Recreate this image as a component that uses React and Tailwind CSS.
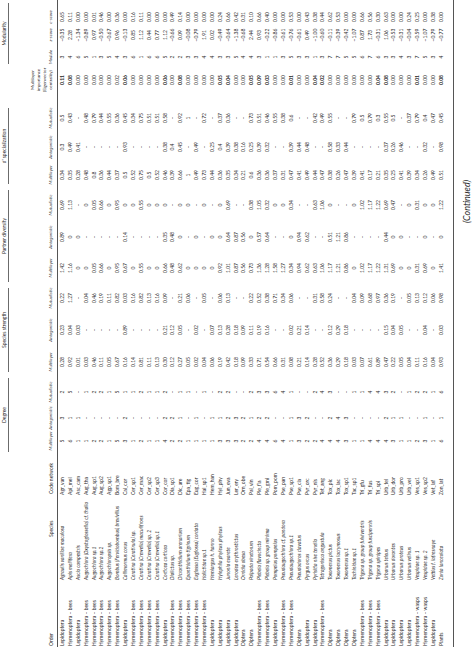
import React from 'react';

const H = 'Hymenoptera – bees';
const L = 'Lepidoptera';
const D = 'Diptera';
const W = 'Hymenoptera – wasps';

// order|species|code|deg ML|deg A|deg M|str ML|str A|str M|div ML|div A|div M|d' ML|d' A|d' M|eigen (* = bold)|module|z|c
const raw = [
  [L, 'Agraulis vanillae maculosa|Agr_van|5|3|2|0.28|0.23|0.22|1.42|0.89|0.69|0.34|0.3|0.5|*0.11|3|−0.35|0.65'],
  [H, 'Apis mellifera|Api_mel|6|1|5|0.92|0.04|1.27|1.16|0|1.13|0.35|0.49|0.43|*0.08|4|2.28|0.11'],
  [L, 'Ascia campestris|Asc_cam|1|1|–|0.01|0.03|–|0|0|–|0.28|0.41|–|0.00|6|−1.34|0.00'],
  [H, 'Augochlora (Oxystoglossella) cf. thalia|Aug_tha|1|–|1|0.03|–|0.04|0|–|0|0.48|–|0.48|0.00|5|−0.89|0.00'],
  [H, 'Augochlora sp.1|Aug_sp1|2|–|2|0.46|–|0.46|0.05|–|0.05|0.8|–|0.79|0.00|1|0.97|0.01'],
  [H, 'Augochlora sp.2|Aug_sp2|2|–|2|0.11|–|0.19|0.66|–|0.66|0.36|–|0.44|0.00|3|−0.50|0.46'],
  [H, 'Augochloropsis sp.|Agp_sp1|1|–|1|0.05|–|0.11|0|–|0|0.44|–|0.55|0.00|5|−0.67|0.00'],
  [H, 'Bombus (Fervidobombus) brevivillus|Bom_bre|5|–|5|0.67|–|0.82|0.95|–|0.95|0.37|–|0.36|0.02|4|0.96|0.36'],
  [L, 'Callimormus corus|Cal_cor|3|2|1|0.16|0.89|0.03|0.67|0.14|0|0.5|0.93|0.45|*0.06|3|−0.13|0.00'],
  [H, 'Ceratina (Ceratinula) sp.|Cer_sp1|1|–|1|0.14|–|0.16|0|–|0|0.52|–|0.34|0.00|6|0.85|0.16'],
  [H, 'Ceratina (Crewella) maculifrons|Cer_mac|2|–|2|0.81|–|0.82|0.55|–|0.55|0.75|–|0.75|0.00|1|1.12|0.11'],
  [H, 'Ceratina (Crewella) sp. 2|Cer_sp2|1|–|1|0.11|–|0.13|0|–|0|0.5|–|0.51|0.00|6|0.44|0.00'],
  [H, 'Ceratina (Crewella) sp.1|Cer_sp3|1|–|1|0.13|–|0.16|0|–|0|0.52|–|0.51|0.00|6|0.77|0.00'],
  [L, 'Corticea corticea|Cor_cor|4|2|2|0.30|0.21|0.09|0.66|0.35|0|0.46|0.38|0.58|*0.06|5|1.12|0.00'],
  [H, 'Dialictus sp.|Dia_sp1|2|2|–|0.12|0.12|–|0.48|0.48|–|0.39|0.4|–|0.00|2|−0.66|0.49'],
  [H, 'Dicranthidium arenarium|Dic_are|2|1|1|0.27|0.05|0.21|0.62|0|0|0.66|0.45|0.92|*0.08|2|0.09|0.14'],
  [H, 'Epanthidium tigrinum|Epa_tig|1|–|1|0.05|–|0.06|0|–|0|1|–|1|0.00|3|−0.08|0.00'],
  [H, 'Euglossa (Euglossa) cordata|Eug_cor|1|1|–|0.02|0.02|–|0|0|–|0.49|0.49|–|0.00|3|−0.79|0.00'],
  [H, 'Halictidae sp.1|Hal_sp1|1|–|1|0.04|–|0.05|0|–|0|0.73|–|0.72|0.00|4|1.91|0.00'],
  [L, 'Hemiargus h. hanno|Hem_han|1|1|–|0.06|0.07|–|0|0|–|0.44|0.25|–|0.00|4|0.02|0.00'],
  [L, 'Hylephila phyleus phyleus|Hyl_phy|3|1|2|0.19|0.13|0.06|0.92|0|0|0.36|0.4|0.37|*0.05|3|−0.49|0.24'],
  [L, 'Junonia evarete|Jun_eva|3|2|2|0.42|0.28|0.13|1.01|0.64|0.69|0.35|0.39|0.36|*0.04|3|−0.64|0.66'],
  [L, 'Lerodea erythrostictus|Ler_ery|3|3|–|0.18|0.18|–|0.87|0.87|–|0.34|0.38|–|0.00|5|−1.38|0.42'],
  [D, 'Ornidia obesa|Orn_obe|2|2|–|0.09|0.09|–|0.56|0.56|–|0.21|0.16|–|0.00|4|−0.68|0.31'],
  [D, 'Palpada vinetorum|Pal_vin|2|1|2|0.33|0.11|0.22|0.73|0|0.38|0.6|0.25|0.73|*0.05|4|2.44|0.10'],
  [H, 'Plebeia flavocincta|Ple_fla|4|2|3|0.71|0.19|0.52|1.36|0.57|1.05|0.36|0.39|0.51|*0.09|3|0.93|0.66'],
  [H, 'Plebeia sp. group minima|Ple_gmi|4|2|3|0.54|0.16|0.38|1.28|0.64|0.32|0.36|0.32|0.46|*0.03|1|−0.22|0.40'],
  [L, 'Pompeius pompeius|Pom_pom|6|–|6|0.66|–|0.71|1.58|–|0|0.37|–|0.55|0.00|1|−0.86|0.00'],
  [H, 'Pseudaugochlora cf. pandora|Pse_pan|4|–|4|0.31|–|0.34|1.27|–|0|0.31|–|0.38|0.00|3|−0.61|0.00'],
  [H, 'Pseudaugochlora sp.1|Pse_sp1|1|1|1|0.08|0.02|0.06|0.34|0|0.34|0.47|0.39|0.6|*0.01|5|−0.76|0.53'],
  [D, 'Pseudodoros clavatus|Pse_cla|3|3|–|0.21|0.21|–|0.94|0.94|–|0.41|0.44|–|0.00|3|−0.61|0.00'],
  [L, 'Pyrgus orcus|Pyr_orc|2|2|–|0.14|0.14|–|0.62|0.62|–|0.49|0.48|–|0.00|3|0.49|0.43'],
  [L, 'Pyrisitia nise tenella|Pyr_nis|2|–|2|0.28|–|0.31|0.63|–|0.63|0.44|–|0.42|*0.04|1|−1.00|0.38'],
  [H, 'Tetragonisca angustula|Tet_ang|4|–|4|0.52|–|0.58|1.06|–|1.06|0.47|–|0.49|*0.02|3|−0.60|0.44'],
  [D, 'Toxomerus pictus|Tox_pic|4|2|3|0.36|0.12|0.24|1.17|0.51|0|0.38|0.58|0.55|0.00|7|−0.11|0.62'],
  [D, 'Toxomerus lacrymosus|Tox_lac|4|4|–|0.29|0.29|–|1.21|1.21|–|0.26|0.33|–|0.00|7|−0.39|0.53'],
  [D, 'Toxomerus sp.1|Tox_sp1|3|3|–|0.18|0.18|–|0.86|0.86|–|0.47|0.44|–|0.00|5|−0.42|0.00'],
  [D, 'Tachinidae sp.1|Tac_sp1|1|–|1|0.03|–|0.04|0|–|0|0.39|–|0.79|0.00|5|−1.07|0.00'],
  [H, 'Trigona sp. group fulviventris|Tri_gfu|1|–|1|0.07|–|0.09|1.02|–|1.02|0.41|–|0.5|0.00|6|0.87|0.66'],
  [H, 'Trigona sp. group fuscipennis|Tri_fus|4|–|4|0.61|–|0.68|1.17|–|1.17|0.17|–|0.79|0.00|7|1.73|0.56'],
  [H, 'Trigona spinipes|Tri_spi|4|–|4|0.89|–|0.97|1.22|–|1.22|0.21|–|0.3|*0.04|6|−0.31|0.30'],
  [L, 'Urbanus teleus|Urb_tel|4|2|3|0.47|0.15|0.36|1.31|0.44|0.69|0.35|0.37|0.55|*0.08|3|1.06|0.63'],
  [L, 'Urbanus dorantes|Urb_dor|3|1|2|0.22|0.04|0.19|0.69|0|0.47|0.25|0.26|0.5|0.00|3|−0.53|0.00'],
  [L, 'Urbanus proteus|Urb_pro|1|1|–|0.05|0.05|–|0|0|–|0.41|0.46|–|0.00|4|−0.31|0.00'],
  [L, 'Urbanus velinus|Urb_vel|1|–|1|0.04|–|0.05|0|–|0|0.39|–|0.37|0.00|3|−0.04|0.24'],
  [W, 'Vespidae sp. 1|Ves_sp1|2|–|2|0.11|–|0.13|0.31|–|0.31|0.34|–|0.79|*0.01|7|−0.59|0.25'],
  [W, 'Vespidae sp. 2|Ves_sp2|3|1|2|0.16|0.04|0.12|0.69|0|0|0.26|0.32|0.4|0.00|5|−1.07|0.00'],
  [L, 'Vettius f. lafresnaye|Vet_laf|1|–|1|0.04|–|0.06|0|–|0|0.49|–|0.47|0.00|3|−0.79|0.38'],
  ['Plants', 'Zonia lanceolata|Zon_lat|6|1|6|0.93|0.03|0.98|1.41|0|1.22|0.51|0.98|0.45|*0.08|4|−0.77|0.00'],
];

const rows = raw.map(([order, rest]) => [order, ...rest.split('|')]);

// column widths along the (unrotated) table, left to right
const grid =
  'grid grid-cols-[67px_84px_41px_28px_18px_34px_26px_38px_26px_34px_28px_36px_24px_32px_26px_12px_26px_20px_24px_12px_11px]';

const sub = ['Multilayer', 'Antagonistic', 'Mutualistic'];

const Group = ({ start, span, children }) => (
  <div
    className="row-start-1 mx-[3px] h-[9px] border-b border-[#6b6b6b] pt-[1px] text-center leading-[6px] whitespace-nowrap"
    style={{ gridColumnStart: start, gridColumnEnd: `span ${span}` }}
  >
    {children}
  </div>
);

const Sub = ({ col, children }) => (
  <div
    className="row-start-2 self-end flex justify-center pb-[3px] text-[4.5px] italic leading-[6px] whitespace-nowrap"
    style={{ gridColumnStart: col }}
  >
    {children}
  </div>
);

export default function App() {
  return (
    <div className="w-[474px] h-[647px] overflow-hidden bg-white">
      <div
        className="w-[647px] h-[474px] origin-top-left -rotate-90 translate-y-[647px] text-[5px] text-[#2b2b2b]"
        style={{ fontFamily: 'Lato, "Open Sans", sans-serif' }}
      >
        {/* header */}
        <div className={`${grid} grid-rows-[9px_48px] border-b border-[#555]`}>
          <Group start={4} span={3}>Degree</Group>
          <Group start={7} span={3}>Species strength</Group>
          <Group start={10} span={3}>Partner diversity</Group>
          <Group start={13} span={3}>
            <span className="italic">d&apos;</span> specialization
          </Group>
          <Group start={18} span={4}>Modularity</Group>

          <div className="col-start-1 row-start-2 self-end pb-[3px] pl-[1px] leading-[6px]">Order</div>
          <div className="col-start-2 row-start-2 self-end pb-[3px] pl-[43px] leading-[6px]">Species</div>
          <div className="col-start-3 row-start-2 self-end pb-[3px] pl-[2px] leading-[6px] whitespace-nowrap">Code network</div>
          {[4, 7, 10, 13].map((c) =>
            sub.map((s, i) => (
              <Sub key={`${c}-${i}`} col={c + i}>
                {s}
              </Sub>
            ))
          )}
          <div className="col-start-[17] row-start-2 self-end flex justify-center pb-[3px] text-center text-[4.5px] leading-[6px] whitespace-nowrap">
            <div>
              Multilayer
              <br />
              importance
              <br />
              (Eigenvector
              <br />
              centrality)
            </div>
          </div>
          <Sub col={18}>Module</Sub>
          <Sub col={19}>z-score</Sub>
          <Sub col={20}>c-score</Sub>
        </div>

        {/* body */}
        <div className="pt-[1px] pb-[7px] border-b border-[#555]">
          {rows.map((r) => (
            <div key={r[2]} className={`${grid} h-[7.9px] leading-[7.9px] whitespace-nowrap`}>
              <div className="pl-[1px]">{r[0]}</div>
              <div className="italic">{r[1]}</div>
              <div className="pl-[1px]">{r[2]}</div>
              {r.slice(3, 15).map((v, i) => (
                <div key={i} className="text-center">{v}</div>
              ))}
              <div />
              <div className={`text-center ${r[15].startsWith('*') ? 'font-bold' : ''}`}>
                {r[15].replace('*', '')}
              </div>
              <div className="text-center">{r[16]}</div>
              <div className="text-center">{r[17]}</div>
              <div className="text-center">{r[18]}</div>
              <div />
            </div>
          ))}
        </div>

        <div className="flex justify-end pr-[180px] pt-[8px] text-[9px] italic leading-[10px]">(Continued)</div>
      </div>
    </div>
  );
}
